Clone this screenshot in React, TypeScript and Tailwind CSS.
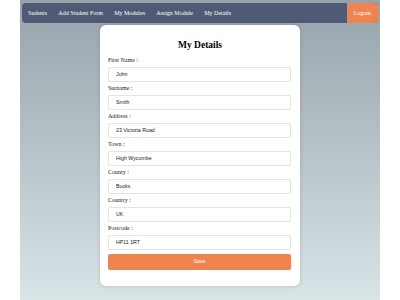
const navLinks = ['Sudents', 'Add Student Form', 'My Modules', 'Assign Module', 'My Details']

const fields = [
  { label: 'First Name :', value: 'John' },
  { label: 'Surname :', value: 'Smith' },
  { label: 'Address :', value: '23 Victoria Road' },
  { label: 'Town :', value: 'High Wycombe' },
  { label: 'County :', value: 'Bucks' },
  { label: 'Country :', value: 'UK' },
  { label: 'Postcode :', value: 'HP11 1RT' },
]

export default function App() {
  return (
    <div className="h-[300px] w-[400px] bg-white" style={{ fontFamily: '"Liberation Serif", serif' }}>
      <div className="mx-[20px] h-full bg-gradient-to-b from-[#97a3ab] to-[#d8e4e6] px-[2px] pt-[3px]">
        {/* Nav */}
        <nav className="flex h-[20px] items-center overflow-hidden rounded-[4px] bg-[#4f5a74] text-[6px] text-white">
          <ul className="flex flex-1 items-center pl-[0.5px]">
            {navLinks.map(link => (
              <li key={link} className="px-[5.6px]">
                {link}
              </li>
            ))}
          </ul>
          <button className="flex h-full items-center rounded-r-[4px] bg-[#f0834f] px-[7px] text-[6px] text-white">
            Logout
          </button>
        </nav>

        {/* Card */}
        <div className="mx-auto mt-[2px] w-[200px] rounded-[6px] bg-white px-[8px] pb-[16px] pt-[13px] shadow-[0_0_4px_rgba(0,0,0,0.15)]">
          <h1 className="text-center text-[9.5px] font-bold leading-[14px] text-black">My Details</h1>
          <form className="mt-[4px]">
            {fields.map(field => (
              <div key={field.label} className="mb-[2px]">
                <label className="block h-[9px] text-[6px] leading-[9px] text-[#222]">{field.label}</label>
                <div
                  className="mt-[2px] flex h-[15px] w-[183px] items-center rounded-[2px] border border-[#e3e3e3] pl-[7px] text-[5.25px] text-[#222]"
                  style={{ fontFamily: '"Liberation Sans", Arial, sans-serif' }}
                >
                  {field.value}
                </div>
              </div>
            ))}
            <button
              type="button"
              className="mt-[4px] flex h-[16px] w-[183px] items-center justify-center rounded-[2px] bg-[#f0834f] text-[5.25px] text-white"
              style={{ fontFamily: '"Liberation Sans", Arial, sans-serif' }}
            >
              Save
            </button>
          </form>
        </div>
      </div>
    </div>
  )
}
